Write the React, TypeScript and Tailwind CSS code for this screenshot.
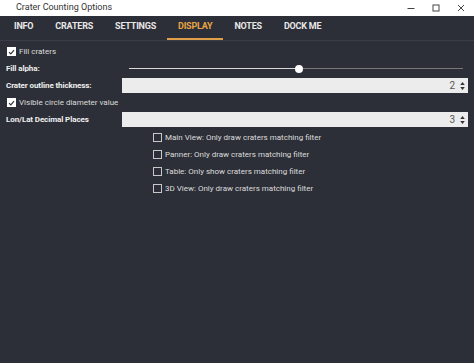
import { useState } from "react";

const tabs = ["INFO", "CRATERS", "SETTINGS", "DISPLAY", "NOTES", "DOCK ME"];

const filters = [
  "Main View: Only draw craters matching filter",
  "Panner: Only draw craters matching filter",
  "Table: Only show craters matching filter",
  "3D View: Only draw craters matching filter",
];

function Check({ checked }: { checked: boolean }) {
  return (
    <span
      className={`flex items-center justify-center w-[9px] h-[9px] border ${
        checked ? "bg-white border-white" : "border-[#c8c8c8]"
      }`}
    >
      {checked && (
        <svg viewBox="0 0 10 10" className="w-[8px] h-[8px]">
          <path d="M1.5 5.2 L4 7.6 L8.6 2.2" fill="none" stroke="#2b2e35" strokeWidth="1.6" />
        </svg>
      )}
    </span>
  );
}

function Spin({ value }: { value: number }) {
  return (
    <div className="flex-1 h-[15px] bg-[#ececec] flex items-center justify-end pr-[3px] text-[10px] text-[#555]">
      <span className="mr-[5px]">{value}</span>
      <div className="flex flex-col items-center gap-[2px]">
        <svg viewBox="0 0 6 4" className="w-[5px] h-[3px]">
          <path d="M0 4 L3 0 L6 4 Z" fill="#333" />
        </svg>
        <svg viewBox="0 0 6 4" className="w-[5px] h-[3px]">
          <path d="M0 0 L3 4 L6 0 Z" fill="#333" />
        </svg>
      </div>
    </div>
  );
}

export default function App() {
  const [active] = useState("DISPLAY");

  return (
    <div className="w-[474px] h-[363px] flex flex-col bg-[#2c2f37] font-['Roboto',sans-serif] overflow-hidden">
      <div className="h-[16px] bg-white flex items-center justify-between pl-[16px] pr-[9px]">
        <span className="text-[9px] text-[#333]">Crater Counting Options</span>
        <div className="flex items-center gap-[17px] text-[#444]">
          <svg viewBox="0 0 8 8" className="w-[8px] h-[8px]">
            <path d="M0.5 4.5 H7.5" stroke="#444" strokeWidth="1" />
          </svg>
          <svg viewBox="0 0 8 8" className="w-[8px] h-[8px]">
            <rect x="1" y="1" width="6" height="6" fill="none" stroke="#444" strokeWidth="1" />
          </svg>
          <svg viewBox="0 0 8 8" className="w-[8px] h-[8px]">
            <path d="M1 1 L7 7 M7 1 L1 7" stroke="#444" strokeWidth="1" />
          </svg>
        </div>
      </div>

      <div className="h-[25px] flex items-stretch pl-[3px] border-b border-[#3a3d45]">
        {tabs.map((t) => (
          <div
            key={t}
            className={`px-[11px] flex items-center text-[9px] tracking-[-0.2px] font-bold border-b-2 ${
              t === active ? "text-[#e8a545] border-[#e0a04a]" : "text-[#e8e8e8] border-transparent"
            }`}
          >
            {t}
          </div>
        ))}
      </div>

      <div className="flex flex-col pl-[7px] pr-[6px] pt-[2px] text-[8px] text-[#dcdcdc]">
        <div className="h-[17px] flex items-center gap-[3px]">
          <Check checked />
          <span>Fill craters</span>
        </div>
        <div className="h-[17px] flex items-center">
          <span className="w-[123px] -ml-[1px] font-bold tracking-[-0.1px] text-[#f0f0f0]">Fill alpha:</span>
          <div className="flex-1 relative h-[8px] flex items-center pr-[5px]">
            <div className="h-[1px] w-[170px] bg-[#d8d8d8]" />
            <div className="h-[1px] flex-1 bg-[#777]" />
            <div className="absolute left-[166px] w-[8px] h-[8px] rounded-full bg-white" />
          </div>
        </div>
        <div className="h-[17px] flex items-center">
          <span className="w-[116px] -ml-[1px] font-bold tracking-[-0.1px] text-[#f0f0f0]">Crater outline thickness:</span>
          <Spin value={2} />
        </div>
        <div className="h-[17px] flex items-center gap-[3px]">
          <Check checked />
          <span>Visible circle diameter value</span>
        </div>
        <div className="h-[17px] flex items-center">
          <span className="w-[116px] -ml-[1px] font-bold tracking-[-0.1px] text-[#f0f0f0]">Lon/Lat Decimal Places</span>
          <Spin value={3} />
        </div>
        <div className="flex flex-col pl-[146px] pt-[1px]">
          {filters.map((f) => (
            <div key={f} className="h-[17px] flex items-center gap-[3px]">
              <Check checked={false} />
              <span>{f}</span>
            </div>
          ))}
        </div>
      </div>
    </div>
  );
}
